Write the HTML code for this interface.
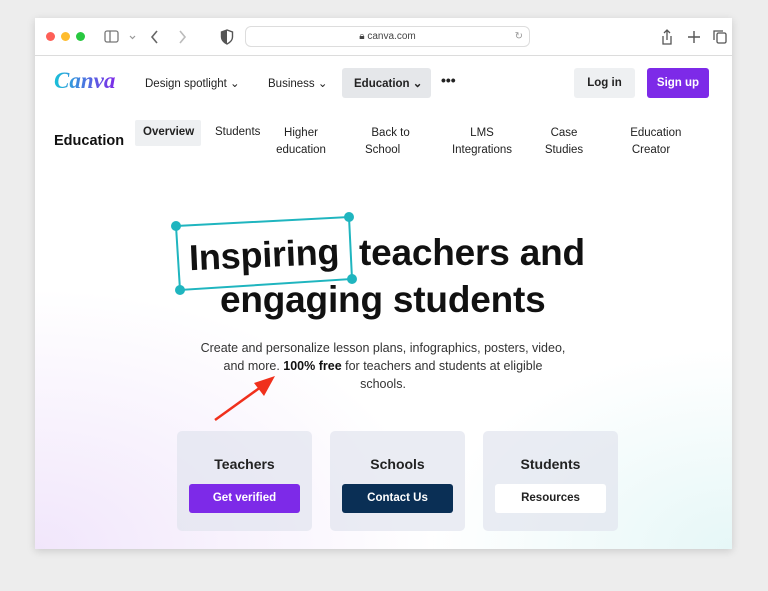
<!DOCTYPE html>
<html><head><meta charset="utf-8"><style>
*{margin:0;padding:0;box-sizing:border-box}
body{width:768px;height:591px;background:#ededed;font-family:"Liberation Sans",sans-serif;position:relative;overflow:hidden}
.win{position:absolute;left:35px;top:18px;width:697px;height:531px;background:#fff;box-shadow:0 2px 8px rgba(0,0,0,.15);overflow:hidden}
.bar{position:absolute;left:0;top:0;width:697px;height:38px;background:#fff;border-bottom:1px solid #dcdcdc}
.dot{position:absolute;top:14px;width:9px;height:9px;border-radius:50%}
.url{position:absolute;left:210px;top:8px;width:285px;height:21px;border:1px solid #ddd;border-radius:6px;font-size:10px;color:#444;text-align:center;line-height:19px}
.page{position:absolute;left:0;top:39px;width:697px;height:492px;background:radial-gradient(ellipse 400px 260px at 0% 100%,#f1e6fb 0%,rgba(255,255,255,0) 100%),radial-gradient(ellipse 300px 200px at 100% 100%,#e6f7f7 0%,rgba(255,255,255,0) 100%),#fff}
.t{position:absolute;font-size:11.5px;color:#222;white-space:nowrap}
.c{text-align:center;line-height:17px}
.h{position:absolute;font-weight:bold;font-size:37px;color:#111;letter-spacing:-0.2px;white-space:nowrap;line-height:42px}
.card{position:absolute;top:374px;width:135px;height:100px;background:rgba(225,228,238,.7);border-radius:5px}
.card .ti{position:absolute;top:25px;width:100%;text-align:center;font-size:14px;font-weight:bold;color:#222}
.card .b{position:absolute;left:12px;top:53px;width:111px;height:29px;border-radius:3px;font-size:11.5px;font-weight:bold;text-align:center;line-height:29px}
.hd{position:absolute;width:10px;height:10px;border-radius:50%;background:#1fb5bf}
</style></head><body>
<div class="win">
<div class="bar">
<div class="dot" style="left:11px;background:#fe5f57"></div>
<div class="dot" style="left:26px;background:#febc2e"></div>
<div class="dot" style="left:41px;background:#28c840"></div>
<svg style="position:absolute;left:69px;top:11px" width="40" height="16"><rect x="1" y="2" width="13" height="11" rx="2" fill="none" stroke="#777" stroke-width="1.3"/><line x1="6" y1="2" x2="6" y2="13" stroke="#777" stroke-width="1.3"/><path d="M26 7l2.5 2.5L31 7" fill="none" stroke="#999" stroke-width="1.2"/></svg>
<svg style="position:absolute;left:115px;top:11px" width="40" height="16"><path d="M7 2L2 8l5 6" fill="none" stroke="#666" stroke-width="1.6"/><path d="M30 2l5 6-5 6" fill="none" stroke="#bbb" stroke-width="1.6"/></svg>
<svg style="position:absolute;left:185px;top:11px" width="14" height="16"><path d="M7 1L1.5 3v5c0 3 2.5 5.5 5.5 7 3-1.5 5.5-4 5.5-7V3z" fill="none" stroke="#555" stroke-width="1.4"/><path d="M7 1v14c-3-1.5-5.5-4-5.5-7V3z" fill="#555"/></svg>
<div class="url">🔒︎ canva.com<span style="position:absolute;right:6px;color:#999">↻</span></div>
<svg style="position:absolute;left:624px;top:8px" width="70" height="20"><path d="M8 4v10M5 7l3-3 3 3M4 10v8h8v-8" fill="none" stroke="#555" stroke-width="1.3"/><path d="M35 5v12M29 11h12" stroke="#555" stroke-width="1.4"/><rect x="58" y="7" width="9" height="10" rx="1.5" fill="none" stroke="#555" stroke-width="1.3"/><path d="M55 14V5h9" fill="none" stroke="#555" stroke-width="1.3"/></svg>
</div>
<div class="page">
<div style="position:absolute;left:19px;top:11px;font-family:'Liberation Serif',serif;font-style:italic;font-weight:bold;font-size:23px;background:linear-gradient(90deg,#18c2d8,#7d2ae8);-webkit-background-clip:text;color:transparent">Canva</div>
<div class="t" style="left:110px;top:19px">Design spotlight ⌄</div>
<div class="t" style="left:233px;top:19px">Business ⌄</div>
<div style="position:absolute;left:307px;top:11px;width:89px;height:30px;background:#e5e7ea;border-radius:3px"></div>
<div class="t" style="left:319px;top:19px;font-weight:bold">Education ⌄</div>
<div class="t" style="left:406px;top:15px;font-weight:bold;font-size:14px">•••</div>
<div style="position:absolute;left:539px;top:11px;width:61px;height:30px;background:#eef0f2;border-radius:3px;font-size:11.5px;font-weight:bold;text-align:center;line-height:30px;color:#222">Log in</div>
<div style="position:absolute;left:612px;top:11px;width:62px;height:30px;background:#7d2ae8;border-radius:3px;font-size:11.5px;font-weight:bold;text-align:center;line-height:30px;color:#fff">Sign up</div>
<div class="t" style="left:19px;top:76px;font-size:14.5px;font-weight:bold;color:#111">Education</div>
<div style="position:absolute;left:100px;top:63px;width:66px;height:26px;background:#eef0f2;border-radius:2px"></div>
<div class="t" style="left:108px;top:69px;font-weight:bold">Overview</div>
<div class="t" style="left:180px;top:69px">Students</div>
<div class="t c" style="left:240px;top:68px;width:52px">Higher<br>education</div>
<div class="t c" style="left:330px;top:68px;width:50px;text-align:left">&nbsp;&nbsp;Back to<br>School</div>
<div class="t c" style="left:414px;top:68px;width:66px">LMS<br>Integrations</div>
<div class="t c" style="left:504px;top:68px;width:50px">Case<br>Studies</div>
<div class="t c" style="left:580px;top:68px;width:72px">&nbsp;&nbsp;&nbsp;Education<br>Creator</div>
<svg style="position:absolute;left:135px;top:155px" width="190" height="85"><path d="M6 14L179 5 182 67 10 78Z" fill="none" stroke="#1fb5bf" stroke-width="2"/></svg>
<div class="hd" style="left:136px;top:164px"></div><div class="hd" style="left:309px;top:155px"></div>
<div class="hd" style="left:312px;top:217px"></div><div class="hd" style="left:140px;top:228px"></div>
<div class="h" style="left:154px;top:177px;transform:rotate(-2.5deg);font-size:36px">Inspiring</div>
<div class="h" style="left:324px;top:175px">teachers and</div>
<div class="h" style="left:185px;top:222px">engaging students</div>
<div style="position:absolute;left:98px;top:282px;width:500px;text-align:center;font-size:12.5px;line-height:18px;color:#333;white-space:nowrap">Create and personalize lesson plans, infographics, posters, video,<br>and more. <b style="color:#111">100% free</b> for teachers and students at eligible<br>schools.</div>
<svg style="position:absolute;left:175px;top:315px" width="70" height="55"><path d="M5 48L55 12" stroke="#f0301c" stroke-width="2.5"/><path d="M65 4L44 11 54 24Z" fill="#f0301c"/></svg>
<div class="card" style="left:142px"><div class="ti">Teachers</div><div class="b" style="background:#7d2ae8;color:#fff">Get verified</div></div>
<div class="card" style="left:295px"><div class="ti">Schools</div><div class="b" style="background:#0a2f55;color:#fff">Contact Us</div></div>
<div class="card" style="left:448px"><div class="ti">Students</div><div class="b" style="background:#fff;color:#222">Resources</div></div>
</div>
</div>
</body></html>
